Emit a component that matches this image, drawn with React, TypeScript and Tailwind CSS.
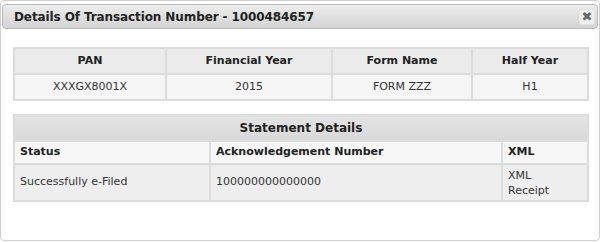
import React from "react";

const cell = "border-2 border-[#dcdcdc] px-[5px] align-middle";

export default function App() {
  return (
    <div className="w-[600px] h-[243px] bg-white font-['DejaVu_Sans',Verdana,sans-serif] text-[11px] text-[#333]">
      <div className="h-[241px] rounded-[4px] border border-[#cfcfcf] px-[1px] pt-[3px]">
        <div className="h-[25px] rounded-[4px] border border-[#b8b8b8] bg-gradient-to-b from-[#ededed] to-[#d3d3d3] flex items-center justify-between pl-[11px] pr-[2px]">
          <span className="font-bold text-[12px] text-[#222] tracking-[-0.1px]">Details Of Transaction Number - 1000484657</span>
          <button className="w-[16px] h-[16px] rounded-[2px] bg-[#efefef] border border-[#e2e2e2] flex items-center justify-center text-[#6a6a6a] text-[13px] font-bold leading-none">
            ✖
          </button>
        </div>

        <div className="px-[11px] pt-[18px]">
          <table className="w-[574px] table-fixed border-collapse border-2 border-[#dcdcdc]">
            <colgroup>
              <col className="w-[152px]" />
              <col className="w-[166px]" />
              <col className="w-[140px]" />
              <col className="w-[116px]" />
            </colgroup>
            <thead>
              <tr className="h-[26px] bg-[#ebebeb] font-bold text-[#222]">
                <th className={cell}>PAN</th>
                <th className={cell}>Financial Year</th>
                <th className={cell}>Form Name</th>
                <th className={cell}>Half Year</th>
              </tr>
            </thead>
            <tbody>
              <tr className="h-[26px] bg-[#f5f5f5] text-center">
                <td className={cell}>XXXGX8001X</td>
                <td className={cell}>2015</td>
                <td className={cell}>FORM ZZZ</td>
                <td className={cell}>H1</td>
              </tr>
            </tbody>
          </table>

          <table className="mt-[13px] w-[574px] table-fixed border-collapse border-2 border-[#dcdcdc]">
            <colgroup>
              <col className="w-[196px]" />
              <col className="w-[292px]" />
              <col className="w-[86px]" />
            </colgroup>
            <thead>
              <tr className="h-[26px] bg-gradient-to-b from-[#e4e4e4] to-[#d9d9d9]">
                <th colSpan={3} className={`${cell} text-[12px] font-bold text-[#222]`}>
                  Statement Details
                </th>
              </tr>
              <tr className="h-[23px] bg-[#f7f7f7] font-bold text-[#222] text-left">
                <th className={cell}>Status</th>
                <th className={cell}>Acknowledgement Number</th>
                <th className={cell}>XML</th>
              </tr>
            </thead>
            <tbody>
              <tr className="h-[37px] bg-[#eeeeee] text-left">
                <td className={cell}>Successfully e-Filed</td>
                <td className={cell}>100000000000000</td>
                <td className={`${cell} leading-[15px]`}>
                  XML
                  <br />
                  Receipt
                </td>
              </tr>
            </tbody>
          </table>
        </div>
      </div>
    </div>
  );
}
